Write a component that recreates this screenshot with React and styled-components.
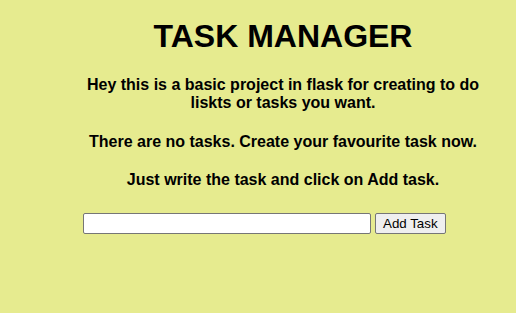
import React, { useState } from "react";
import styled, { createGlobalStyle } from "styled-components";

const GlobalStyle = createGlobalStyle`
  html, body {
    margin: 0;
    padding: 0;
    background: #e6eb8f;
    font-family: "Liberation Sans", Arial, sans-serif;
    color: #000;
  }
`;

const Page = styled.div`
  min-height: 313px;
  background: #e6eb8f;
  overflow: hidden;
`;

const Main = styled.div`
  width: 400px;
  margin-left: 83px;
  text-align: center;
`;

const Title = styled.h1`
  font-size: 32px;
  font-weight: bold;
  margin: 18px 0 21px;
`;

const Note = styled.h4`
  font-size: 16px;
  font-weight: bold;
  margin: 20.5px 0;
`;

const TaskForm = styled.form`
  display: flex;
  align-items: center;
  gap: 4px;
  margin-top: 24px;
`;

const TaskInput = styled.input`
  width: 288px;
  height: 21px;
  box-sizing: border-box;
  margin: 0;
  font-family: "Liberation Sans", Arial, sans-serif;
  font-size: 13.33px;
  border: 1px solid #767676;
  border-radius: 2px;
  background: #fff;
  padding: 1px 2px;
`;

const AddButton = styled.button`
  height: 21px;
  box-sizing: border-box;
  margin: 0;
  padding: 1px 7px;
  font-family: "Liberation Sans", Arial, sans-serif;
  font-size: 13.33px;
  color: #000;
  background: #efefef;
  border: 1px solid #767676;
  border-radius: 2px;
`;

const App = () => {
  const [task, setTask] = useState("");

  return (
    <Page>
      <GlobalStyle />
      <Main>
        <Title>TASK MANAGER</Title>
        <Note>
          Hey this is a basic project in flask for creating to do liskts or tasks you want.
        </Note>
        <Note>There are no tasks. Create your favourite task now.</Note>
        <Note>Just write the task and click on Add task.</Note>
        <TaskForm onSubmit={(e) => e.preventDefault()}>
          <TaskInput
            type="text"
            name="content"
            value={task}
            onChange={(e) => setTask(e.target.value)}
          />
          <AddButton type="submit">Add Task</AddButton>
        </TaskForm>
      </Main>
    </Page>
  );
};

export default App;
